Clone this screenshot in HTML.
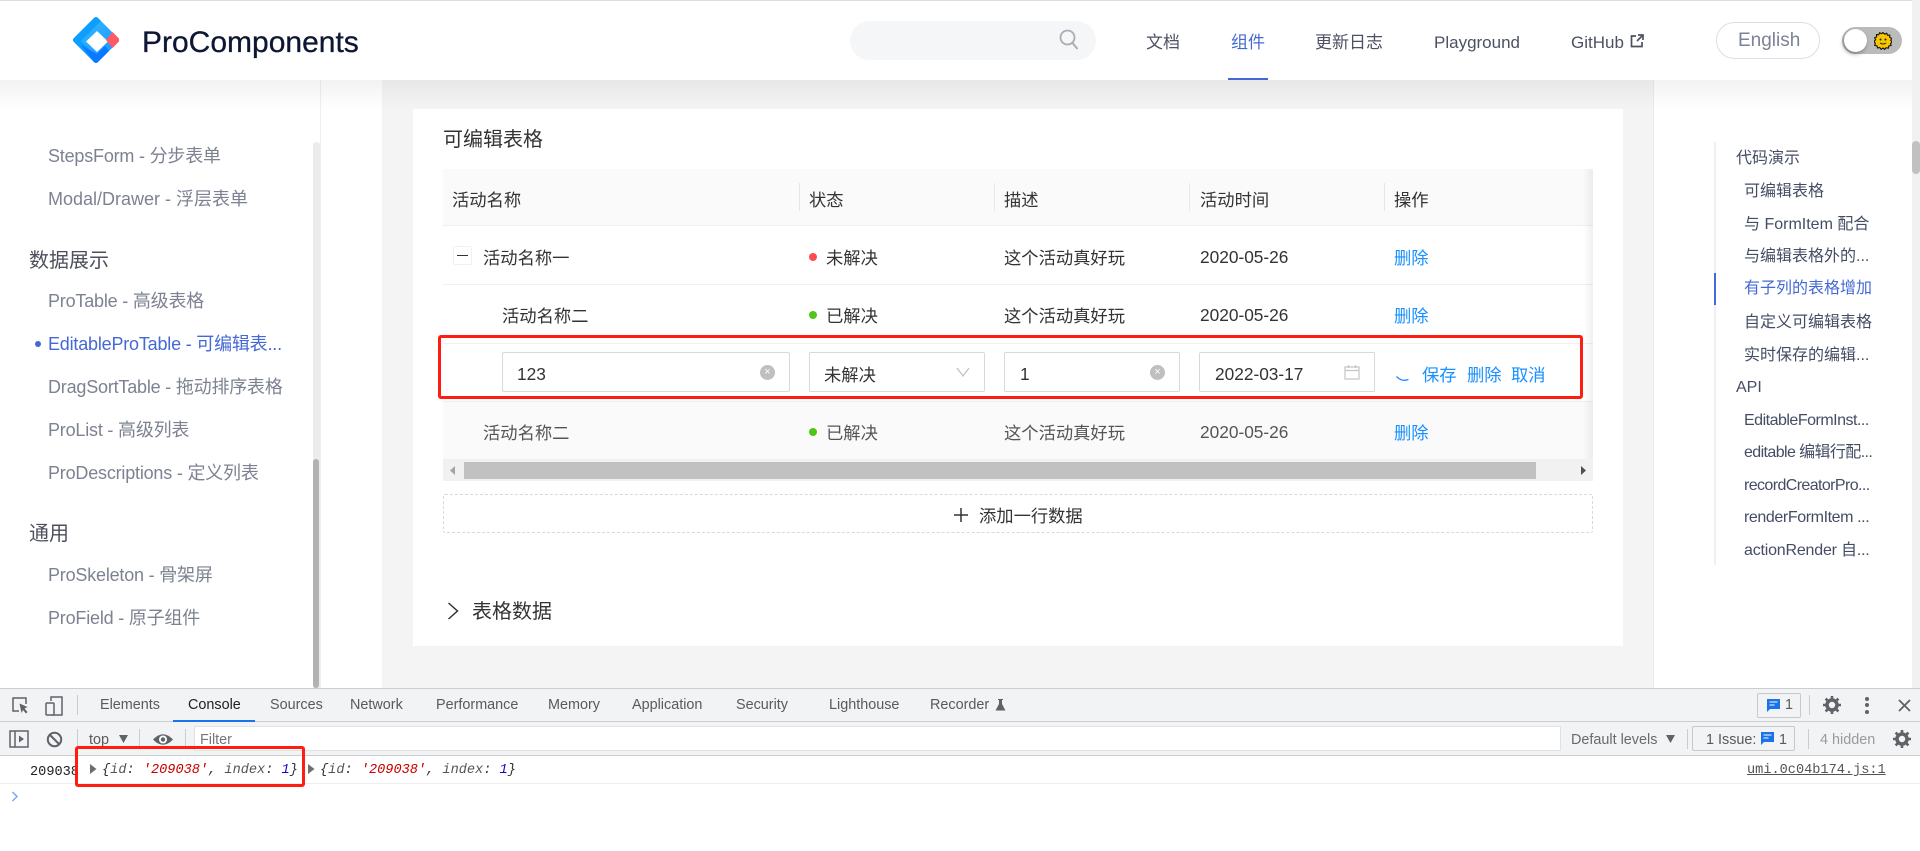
<!DOCTYPE html>
<html lang="zh"><head><meta charset="utf-8"><title>ProComponents</title>
<style>
html,body{margin:0;padding:0;width:1920px;height:851px;overflow:hidden;background:#fff}
body{position:relative;font-family:"Liberation Sans","Noto Sans CJK SC",sans-serif;font-size:17px;color:#333}
.a{position:absolute;box-sizing:border-box}
.t{position:absolute;white-space:nowrap;line-height:24px}
.s{color:#7d8292;font-size:18px;left:48px;letter-spacing:-.2px}
.h{color:#4d505c;font-size:20px;left:29px}
.n{color:#4d5164;font-size:17px;top:31px}
.c{color:#454d64;font-size:16px;left:1744px}
.r{color:#333;font-size:17.3px}
.l{color:#1890ff;font-size:17.3px}
.i{background:#fff;border:1px solid #d9d9d9;border-radius:2px;height:40px;top:352px}
.sep{width:1px;height:28px;top:183px;background:#e6e6e6}
.d{width:8px;height:8px;border-radius:50%}
.x{width:15px;height:15px;border-radius:50%;background:#bfbfbf;color:#fff;font-size:11px;line-height:14px;text-align:center;top:365px}
.rb{position:absolute;box-sizing:border-box;border:3px solid #ff1d12;border-radius:3px}
.tb{color:#5a5a5a;font-size:14.4px;top:693px}
.dv{position:absolute;width:1px;background:#ccc}
.m{font-family:"Liberation Mono",monospace;font-size:13.6px}
</style></head><body>

<!-- content backgrounds -->
<div class="a" style="left:382px;top:80px;width:1272px;height:608px;background:#f4f4f4;border-right:1px solid #ececec"></div>
<div class="a" style="left:320px;top:80px;width:1px;height:608px;background:#eeeeee"></div>
<div class="a" style="left:313px;top:142px;width:7px;height:546px;background:#ececec;border-radius:3px 3px 0 0"></div>
<div class="a" style="left:313px;top:459px;width:6px;height:229px;background:#b2b2b2;border-radius:3px"></div>
<div class="a" style="left:1912px;top:0;width:8px;height:688px;background:#f1f1f1"></div>
<div class="a" style="left:1912px;top:141px;width:8px;height:33px;background:#c1c1c1;border-radius:4px"></div>

<!-- sidebar -->
<div class="t s" style="top:144px">StepsForm - 分步表单</div>
<div class="t s" style="top:187px;letter-spacing:0">Modal/Drawer - 浮层表单</div>
<div class="t h" style="top:249px">数据展示</div>
<div class="t s" style="top:289px">ProTable - 高级表格</div>
<div class="a" style="left:35px;top:341px;width:6px;height:6px;border-radius:50%;background:#4569d4"></div>
<div class="t s" style="top:332px;color:#4569d4">EditableProTable - 可编辑表...</div>
<div class="t s" style="top:375px">DragSortTable - 拖动排序表格</div>
<div class="t s" style="top:418px">ProList - 高级列表</div>
<div class="t s" style="top:461px">ProDescriptions - 定义列表</div>
<div class="t h" style="top:522px">通用</div>
<div class="t s" style="top:563px">ProSkeleton - 骨架屏</div>
<div class="t s" style="top:606px">ProField - 原子组件</div>

<!-- card -->
<div class="a" style="left:413px;top:109px;width:1210px;height:537px;background:#fff"></div>
<div class="t" style="left:443px;top:128px;font-size:20px;color:#333">可编辑表格</div>

<!-- table -->
<div class="a" style="left:443px;top:169px;width:1150px;height:57px;background:#fafafa;border-bottom:1px solid #f0f0f0"></div>
<div class="a" style="left:443px;top:284px;width:1150px;height:1px;background:#f0f0f0"></div>
<div class="a" style="left:443px;top:343px;width:1150px;height:1px;background:#f0f0f0"></div>
<div class="a" style="left:443px;top:401px;width:1150px;height:58px;background:#fafafa;border-top:1px solid #f0f0f0"></div>
<div class="a sep" style="left:799px"></div><div class="a sep" style="left:994px"></div><div class="a sep" style="left:1189px"></div><div class="a sep" style="left:1384px"></div>
<div class="t r" style="left:452px;top:188px">活动名称</div>
<div class="t r" style="left:809px;top:188px">状态</div>
<div class="t r" style="left:1004px;top:188px">描述</div>
<div class="t r" style="left:1200px;top:188px">活动时间</div>
<div class="t r" style="left:1394px;top:188px">操作</div>

<div class="a" style="left:453px;top:246px;width:19px;height:19px;border:1px solid #f0f0f0;border-radius:2px;background:#fff"></div>
<div class="a" style="left:457px;top:255px;width:11px;height:1px;background:#333"></div>
<div class="t r" style="left:483px;top:246px">活动名称一</div>
<div class="a d" style="left:809px;top:253px;background:#ff4d4f"></div>
<div class="t r" style="left:826px;top:246px">未解决</div>
<div class="t r" style="left:1004px;top:246px">这个活动真好玩</div>
<div class="t r" style="left:1200px;top:245px">2020-05-26</div>
<div class="t l" style="left:1394px;top:246px">删除</div>

<div class="t r" style="left:502px;top:304px">活动名称二</div>
<div class="a d" style="left:809px;top:311px;background:#52c41a"></div>
<div class="t r" style="left:826px;top:304px">已解决</div>
<div class="t r" style="left:1004px;top:304px">这个活动真好玩</div>
<div class="t r" style="left:1200px;top:303px">2020-05-26</div>
<div class="t l" style="left:1394px;top:304px">删除</div>

<!-- edit row -->
<div class="a i" style="left:502px;width:288px"></div>
<div class="t r" style="left:517px;top:362px">123</div>
<div class="a x" style="left:760px">×</div>
<div class="a i" style="left:809px;width:176px"></div>
<div class="t r" style="left:824px;top:363px">未解决</div>
<svg class="a" style="left:956px;top:366px" width="14" height="12" viewBox="0 0 14 12"><path d="M1 2l6 8 6-8" fill="none" stroke="#bfbfbf" stroke-width="1.2"/></svg>
<div class="a i" style="left:1004px;width:176px"></div>
<div class="t r" style="left:1020px;top:362px">1</div>
<div class="a x" style="left:1150px">×</div>
<div class="a i" style="left:1199px;width:176px"></div>
<div class="t r" style="left:1215px;top:362px">2022-03-17</div>
<svg class="a" style="left:1344px;top:364px" width="16" height="16" viewBox="0 0 16 16"><path d="M1 3h14v12H1zM1 6.500h14M4.500 1v3M11.500 1v3" fill="none" stroke="#c4c4c4" stroke-width="1.200"/></svg>
<svg class="a" style="left:1395px;top:374px" width="15" height="9" viewBox="0 0 15 9"><path d="M1.500 2.500Q7 8 13.500 5.500" fill="none" stroke="#1890ff" stroke-width="1.300"/></svg>
<div class="t l" style="left:1422px;top:363px">保存</div>
<div class="t l" style="left:1467px;top:363px">删除</div>
<div class="t l" style="left:1511px;top:363px">取消</div>

<div class="t r" style="left:483px;top:421px;color:#555">活动名称二</div>
<div class="a d" style="left:809px;top:428px;background:#52c41a"></div>
<div class="t r" style="left:826px;top:421px;color:#555">已解决</div>
<div class="t r" style="left:1004px;top:421px;color:#555">这个活动真好玩</div>
<div class="t r" style="left:1200px;top:420px;color:#555">2020-05-26</div>
<div class="t l" style="left:1394px;top:421px">删除</div>

<!-- horizontal scrollbar -->
<div class="a" style="left:443px;top:459px;width:1150px;height:22px;background:#f1f1f1"></div>
<div class="a" style="left:464px;top:462px;width:1072px;height:17px;background:#c1c1c1"></div>
<svg class="a" style="left:449px;top:465px" width="8" height="11" viewBox="0 0 8 11"><path d="M6 1v9L1 5.500z" fill="#a3a3a3"/></svg>
<svg class="a" style="left:1579px;top:465px" width="8" height="11" viewBox="0 0 8 11"><path d="M2 1v9l5-4.500z" fill="#505050"/></svg>
<div class="a" style="left:1583px;top:169px;width:10px;height:290px;background:linear-gradient(90deg,rgba(0,0,0,0),rgba(0,0,0,.06))"></div>

<!-- add -->
<div class="a" style="left:443px;top:494px;width:1150px;height:39px;border:1px dashed #d9d9d9;border-radius:2px"></div>
<svg class="a" style="left:953px;top:507px" width="16" height="16" viewBox="0 0 16 16"><path d="M8 1v14M1 8h14" stroke="#333" stroke-width="1.500"/></svg>
<div class="t r" style="left:979px;top:504px">添加一行数据</div>

<svg class="a" style="left:446px;top:601px" width="14" height="20" viewBox="0 0 14 20"><path d="M2.500 2l9 8-9 8" fill="none" stroke="#333" stroke-width="1.500"/></svg>
<div class="t" style="left:472px;top:600px;font-size:20px;color:#333">表格数据</div>

<!-- toc -->
<div class="a" style="left:1714px;top:142px;width:2px;height:423px;background:#eef0f4"></div>
<div class="a" style="left:1714px;top:273px;width:2px;height:32px;background:#4569d4"></div>
<div class="t c" style="left:1736px;top:147px">代码演示</div>
<div class="t c" style="top:180px">可编辑表格</div>
<div class="t c" style="top:213px">与 FormItem 配合</div>
<div class="t c" style="top:245px">与编辑表格外的...</div>
<div class="t c" style="top:277px;color:#4569d4">有子列的表格增加</div>
<div class="t c" style="top:311px">自定义可编辑表格</div>
<div class="t c" style="top:344px">实时保存的编辑...</div>
<div class="t c" style="left:1736px;top:376px">API</div>
<div class="t c" style="top:409px;letter-spacing:-.5px">EditableFormInst...</div>
<div class="t c" style="top:441px;letter-spacing:-.6px">editable 编辑行配...</div>
<div class="t c" style="top:474px;letter-spacing:-.6px">recordCreatorPro...</div>
<div class="t c" style="top:506px;letter-spacing:-.4px">renderFormItem ...</div>
<div class="t c" style="top:539px;letter-spacing:-.2px">actionRender 自...</div>

<!-- header shadow -->
<div class="a" style="left:0;top:80px;width:1912px;height:30px;background:linear-gradient(180deg,rgba(0,0,0,.05),rgba(0,0,0,0))"></div>

<!-- header -->
<div class="a" style="left:0;top:0;width:1912px;height:80px;background:#fff;border-top:1px solid #dedede"></div>
<svg class="a" style="left:73px;top:17px" width="46" height="46" viewBox="0 0 46 46">
<defs><linearGradient id="g1" x1="0" y1="0" x2="1" y2="1"><stop offset="0" stop-color="#38c0ff"/><stop offset="1" stop-color="#1890ff"/></linearGradient></defs>
<path d="M21 1q2-2 4 0l20 20q2 2 0 4L25 45q-2 2-4 0L1 25q-2-2 0-4z" fill="url(#g1)"/>
<path d="M1 21L21 1q2-2 4 0l3 3L8 24l16 16-3 5L1 25q-2-2 0-4z" fill="#0d9eff"/>
<path d="M8 28l13 17q2 2 4 0l11-11-4-5-8 8z" fill="#0a78ff"/>
<path d="M24 14L35 24.500 24 35 13 24.500z" fill="#fff"/>
<path d="M39.500 15l6 6q1.500 2 0 4l-6 6L33 23z" fill="#ff5a64"/>
</svg>
<div class="t" style="left:142px;top:29px;font-size:30px;line-height:28px;color:#0d1733;-webkit-text-stroke:.3px #0d1733">ProComponents</div>
<div class="a" style="left:850px;top:21px;width:246px;height:39px;background:#f5f6f8;border-radius:20px"></div>
<svg class="a" style="left:1058px;top:28px" width="22" height="24" viewBox="0 0 22 24"><circle cx="9.500" cy="9.500" r="7" fill="none" stroke="#a9acb3" stroke-width="1.800"/><path d="M14.500 15l5 6" stroke="#a9acb3" stroke-width="2"/></svg>
<div class="t n" style="left:1146px">文档</div>
<div class="t n" style="left:1231px;color:#4569d4">组件</div>
<div class="a" style="left:1228px;top:78px;width:40px;height:2px;background:#4569d4"></div>
<div class="t n" style="left:1315px">更新日志</div>
<div class="t n" style="left:1434px">Playground</div>
<div class="t n" style="left:1571px">GitHub</div>
<svg class="a" style="left:1630px;top:34px" width="14" height="14" viewBox="0 0 14 14"><path d="M6 2H1.500v10.500H12V8M8 1h5v5M13 1L7 7" fill="none" stroke="#4d5164" stroke-width="1.700"/></svg>
<div class="a" style="left:1716px;top:22px;width:104px;height:37px;border:1px solid #dcdfe3;border-radius:19px"></div>
<div class="t" style="left:1738px;top:29px;font-size:19px;color:#7d8296">English</div>
<div class="a" style="left:1842px;top:27px;width:60px;height:27px;background:#bbb;border-radius:14px"></div>
<div class="a" style="left:1844px;top:29px;width:23px;height:23px;background:#fff;border-radius:50%;box-shadow:-1px 2px 4px rgba(0,0,0,.35)"></div>
<svg class="a" style="left:1874px;top:32px" width="18" height="18" viewBox="0 0 18 18"><path d="M9 .5l1.700 1.700 2-1 .9 2.100 2.200-.2-.1 2.300 2 .9-1 2 1.600 1.700-1.800 1.400.6 2.200-2.300.4-.5 2.200-2.200-.5-1.400 1.800L9 16l-1.900 1.300-1.400-1.800-2.200.5-.5-2.200-2.300-.4.600-2.200L0 9.500 1.600 7.800.6 5.800l2-.9-.1-2.300 2.200.2.900-2.100 2 1z" fill="#f7c600" stroke="#111" stroke-width="1.100"/><circle cx="6.500" cy="7.500" r="1" fill="#222"/><circle cx="11.500" cy="7.500" r="1" fill="#222"/><path d="M6 11q3 2 6 0" fill="none" stroke="#222"/></svg>

<!-- red rect 1 -->
<div class="rb" style="left:438px;top:335px;width:1145px;height:64px"></div>

<!-- devtools -->
<div class="a" style="left:0;top:688px;width:1920px;height:163px;background:#fff"></div>
<div class="a" style="left:0;top:688px;width:1920px;height:34px;background:#f1f3f4;border-top:1px solid #cbcdd1;border-bottom:1px solid #cbcdd1"></div>
<div class="a" style="left:0;top:722px;width:1920px;height:34px;background:#f1f3f4;border-bottom:1px solid #cbcdd1"></div>
<svg class="a" style="left:11px;top:696px" width="20" height="20" viewBox="0 0 20 20"><path d="M8 15H2V2h13v6" fill="none" stroke="#5f6368" stroke-width="1.500"/><path d="M8.500 7.500l8 3.500-3 1.500 3 3.500-1.500 1.500-3-3.500-1.500 3z" fill="#5f6368"/></svg>
<svg class="a" style="left:44px;top:695px" width="20" height="22" viewBox="0 0 20 22"><path d="M7 6V2h11v18H7" fill="none" stroke="#5f6368" stroke-width="1.500"/><rect x="2" y="8" width="8" height="12" rx="1" fill="#f1f3f4" stroke="#5f6368" stroke-width="1.500"/></svg>
<div class="dv" style="left:77px;top:695px;height:20px"></div>
<div class="t tb" style="left:100px">Elements</div>
<div class="t tb" style="left:188px;color:#202124">Console</div>
<div class="a" style="left:173px;top:720px;width:82px;height:2px;background:#1a73e8"></div>
<div class="t tb" style="left:270px">Sources</div>
<div class="t tb" style="left:350px">Network</div>
<div class="t tb" style="left:436px">Performance</div>
<div class="t tb" style="left:548px">Memory</div>
<div class="t tb" style="left:632px">Application</div>
<div class="t tb" style="left:736px">Security</div>
<div class="t tb" style="left:829px">Lighthouse</div>
<div class="t tb" style="left:930px">Recorder</div>
<svg class="a" style="left:995px;top:698px" width="11" height="14" viewBox="0 0 11 14"><path d="M3 1h5v1H7v4l3.500 6.500H.5L4 6V2H3z" fill="#5f6368"/></svg>

<div class="a" style="left:1757px;top:693px;width:44px;height:25px;border:1px solid #c6c8cc;border-radius:2px"></div>
<svg class="a" style="left:1766px;top:698px" width="15" height="15" viewBox="0 0 15 15"><path d="M1 1h13v10H4l-3 3z" fill="#1a73e8"/><path d="M3.500 4h8M3.500 7h5" stroke="#fff"/></svg>
<div class="t" style="left:1785px;top:693px;font-size:14.400px;color:#5a5a5a">1</div>
<div class="dv" style="left:1809px;top:695px;height:20px"></div>
<svg class="a" style="left:1823px;top:696px" width="18" height="18" viewBox="0 0 18 18"><circle cx="9" cy="9" r="5" fill="none" stroke="#5f6368" stroke-width="3.500"/><path d="M9 0v4M9 14v4M0 9h4M14 9h4M2.600 2.600l2.800 2.800M12.600 12.600l2.800 2.800M2.600 15.400l2.800-2.800M12.600 5.400l2.800-2.800" stroke="#5f6368" stroke-width="2.600"/></svg>
<div class="a" style="left:1865px;top:697px;width:4px;height:4px;border-radius:50%;background:#5f6368"></div>
<div class="a" style="left:1865px;top:703px;width:4px;height:4px;border-radius:50%;background:#5f6368"></div>
<div class="a" style="left:1865px;top:710px;width:4px;height:4px;border-radius:50%;background:#5f6368"></div>
<svg class="a" style="left:1898px;top:699px" width="13" height="13" viewBox="0 0 13 13"><path d="M1 1l11 11M12 1L1 12" stroke="#5f6368" stroke-width="1.800"/></svg>

<svg class="a" style="left:9px;top:730px" width="20" height="18" viewBox="0 0 20 18"><rect x="1" y="1" width="18" height="16" fill="none" stroke="#5f6368" stroke-width="1.500"/><path d="M6 1v16" stroke="#5f6368" stroke-width="1.500"/><path d="M10 5.500l5 3.500-5 3.500z" fill="#5f6368"/></svg>
<svg class="a" style="left:46px;top:731px" width="17" height="17" viewBox="0 0 17 17"><circle cx="8.500" cy="8.500" r="6.700" fill="none" stroke="#5f6368" stroke-width="2"/><path d="M4 4l9 9" stroke="#5f6368" stroke-width="2"/></svg>
<div class="dv" style="left:77px;top:729px;height:20px"></div>
<div class="t tb" style="left:89px;top:728px">top</div>
<svg class="a" style="left:118px;top:734px" width="11" height="10" viewBox="0 0 11 10"><path d="M1 1h9L5.500 9z" fill="#5f6368"/></svg>
<div class="dv" style="left:139px;top:729px;height:20px"></div>
<svg class="a" style="left:152px;top:732px" width="22" height="15" viewBox="0 0 22 15"><path d="M1 7.500Q11-3 21 7.500 11 18 1 7.500z" fill="#5f6368"/><circle cx="11" cy="7.500" r="4" fill="#fff"/><circle cx="11" cy="7.500" r="2.200" fill="#5f6368"/></svg>
<div class="dv" style="left:185px;top:729px;height:20px"></div>
<div class="a" style="left:194px;top:726px;width:1367px;height:25px;background:#fff;border:1px solid #e0e1e3"></div>
<div class="t" style="left:200px;top:728px;font-size:14.400px;color:#777">Filter</div>
<div class="t tb" style="left:1571px;top:728px;color:#6a6a6a">Default levels</div>
<svg class="a" style="left:1665px;top:734px" width="11" height="10" viewBox="0 0 11 10"><path d="M1 1h9L5.500 9z" fill="#5f6368"/></svg>
<div class="dv" style="left:1687px;top:729px;height:20px"></div>
<div class="a" style="left:1692px;top:726px;width:103px;height:25px;border:1px solid #c6c8cc;border-radius:2px"></div>
<div class="t tb" style="left:1706px;top:728px">1 Issue:</div>
<svg class="a" style="left:1760px;top:731px" width="15" height="15" viewBox="0 0 15 15"><path d="M1 1h13v10H4l-3 3z" fill="#1a73e8"/><path d="M3.500 4h8M3.500 7h5" stroke="#fff"/></svg>
<div class="t tb" style="left:1779px;top:728px">1</div>
<div class="dv" style="left:1808px;top:729px;height:20px"></div>
<div class="t tb" style="left:1820px;top:728px;color:#9a9a9a">4 hidden</div>
<svg class="a" style="left:1893px;top:730px" width="18" height="18" viewBox="0 0 18 18"><circle cx="9" cy="9" r="5" fill="none" stroke="#5f6368" stroke-width="3.500"/><path d="M9 0v4M9 14v4M0 9h4M14 9h4M2.600 2.600l2.800 2.800M12.600 12.600l2.800 2.800M2.600 15.400l2.800-2.800M12.600 5.400l2.800-2.800" stroke="#5f6368" stroke-width="2.600"/></svg>

<div class="a" style="left:0;top:783px;width:1920px;height:1px;background:#eeeeee"></div>
<div class="t m" style="left:30px;top:761px;color:#222">209038</div>
<svg class="a" style="left:89px;top:764px" width="8" height="10" viewBox="0 0 8 10"><path d="M1 0l6.500 5L1 10z" fill="#6e6e6e"/></svg>
<div class="t m" style="left:102px;top:759px;font-style:italic;color:#333">{<span style="color:#565656">id</span>: <span style="color:#c80000">'209038'</span>, <span style="color:#565656">index</span>: <span style="color:#1c00cf">1</span>}</div>
<svg class="a" style="left:307px;top:764px" width="8" height="10" viewBox="0 0 8 10"><path d="M1 0l6.500 5L1 10z" fill="#6e6e6e"/></svg>
<div class="t m" style="left:320px;top:759px;font-style:italic;color:#333">{<span style="color:#565656">id</span>: <span style="color:#c80000">'209038'</span>, <span style="color:#565656">index</span>: <span style="color:#1c00cf">1</span>}</div>
<div class="t m" style="left:1747px;top:759px;color:#545454;text-decoration:underline">umi.0c04b174.js:1</div>
<svg class="a" style="left:11px;top:791px" width="8" height="11" viewBox="0 0 8 11"><path d="M1.500 1l4.500 4.500L1.500 10" fill="none" stroke="#7baaf7" stroke-width="1.500"/></svg>

<!-- red rect 2 -->
<div class="rb" style="left:75px;top:746px;width:230px;height:41px"></div>

</body></html>
